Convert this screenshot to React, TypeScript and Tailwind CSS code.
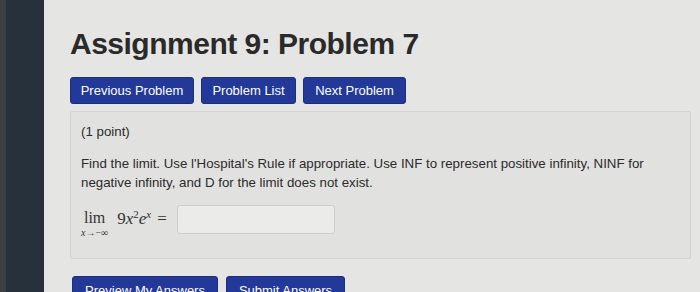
export default function App() {
  return (
    <div className="flex h-[292px] w-[700px] overflow-hidden bg-[#e5e5e3] font-['Liberation_Sans',Arial,sans-serif] text-[#2b2b2b]">
      {/* dark sidebar edge */}
      <div className="flex w-[44px] shrink-0">
        <div className="w-[6px] bg-[#3b3e42]" />
        <div className="flex-1 bg-[#27313c]" />
      </div>

      <main className="flex-1 pl-[26px] pr-[9px] pt-[24px]">
        <h1 className="text-[30px] font-bold leading-[40px] tracking-[-0.5px] text-[#2a2a2a]">
          Assignment 9: Problem 7
        </h1>

        <div className="mt-[13px] flex gap-[7px]">
          <button className="h-[27px] w-[124px] rounded-[3px] border border-[#1a2f7a] bg-[#22399a] text-[13px] text-white">
            Previous Problem
          </button>
          <button className="h-[27px] w-[95px] rounded-[3px] border border-[#1a2f7a] bg-[#22399a] text-[13px] text-white">
            Problem List
          </button>
          <button className="h-[27px] w-[103px] rounded-[3px] border border-[#1a2f7a] bg-[#22399a] text-[13px] text-white">
            Next Problem
          </button>
        </div>

        <section className="mt-[7px] h-[148px] rounded-[2px] border border-[#d3d3d1] bg-[#e1e1df] px-[10px] pt-[10px] text-[13.3px]">
          <p className="leading-[19px]">(1 point)</p>
          <p className="mt-[13px] leading-[19px]">
            Find the limit. Use l'Hospital's Rule if appropriate. Use INF to represent positive infinity, NINF for
            negative infinity, and D for the limit does not exist.
          </p>
          <div className="mt-[13px] flex items-center font-['Liberation_Serif','Times_New_Roman',serif] text-[#333]">
            <div className="mt-[4px] flex flex-col items-center">
              <span className="text-[16px] leading-[18px]">lim</span>
              <span className="text-[10px] leading-[11px]">
                <i>x</i>→−∞
              </span>
            </div>
            <span className="ml-[9px] mt-[-6px] text-[17px]">
              9<i>x</i>
              <sup className="text-[11px]">2</sup>
              <i>e</i>
              <sup className="text-[11px] italic">x</sup>
              <span className="ml-[6px]">=</span>
            </span>
            <input
              className="ml-[10px] mt-[-4px] h-[29px] w-[158px] rounded-[3px] border border-[#cdcdcb] bg-[#ebebea]"
              readOnly
            />
          </div>
        </section>

        <div className="mt-[17px] flex gap-[8px] pl-[2px]">
          <button className="flex h-[30px] w-[146px] items-start justify-center rounded-[3px] border border-[#1a2f7a] bg-[#22399a] pt-[4px] text-[13px] leading-[19px] text-white">
            Preview My Answers
          </button>
          <button className="flex h-[30px] w-[119px] items-start justify-center rounded-[3px] border border-[#1a2f7a] bg-[#22399a] pt-[4px] text-[13px] leading-[19px] text-white">
            Submit Answers
          </button>
        </div>
      </main>
    </div>
  );
}
